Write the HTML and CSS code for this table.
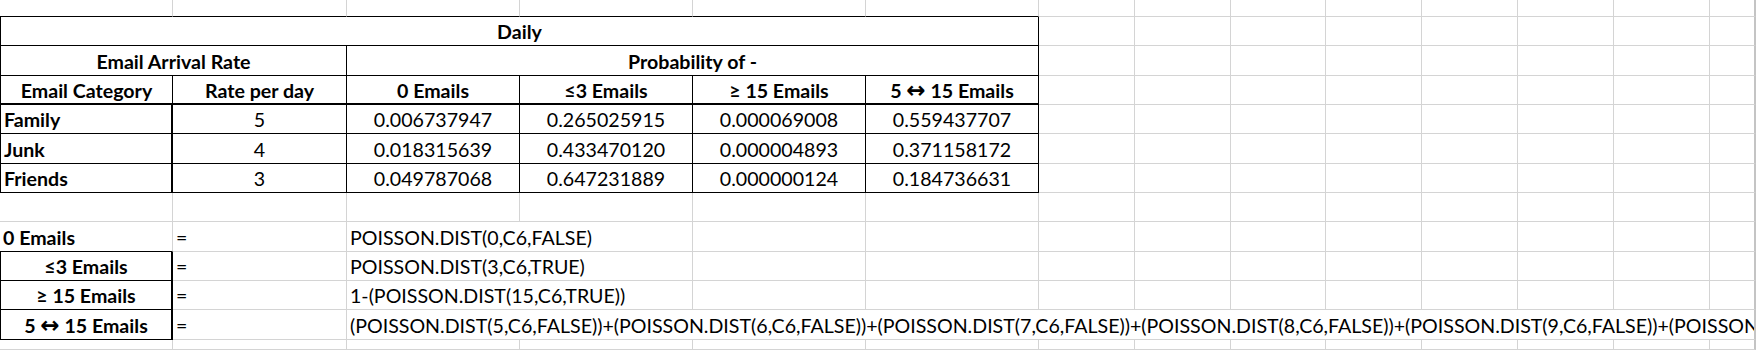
FILE: index.html
```html
<!DOCTYPE html>
<html lang="en">
<head>
<meta charset="utf-8">
<title>Daily Email Poisson</title>
<link rel="stylesheet" href="styles.css">
</head>
<body>
<div class="sheet">
  <!-- row 1 -->
  <div class="bb"></div><div class="bb"></div><div class="bb"></div><div class="bb"></div><div class="bb"></div><div class="bb"></div>
  <div></div><div></div><div></div><div></div><div></div><div></div><div></div><div class="last"></div>
  <!-- row 2 -->
  <div class="c b bb br bl span6">Daily</div>
  <div></div><div></div><div></div><div></div><div></div><div></div><div></div><div class="last"></div>
  <!-- row 3 -->
  <div class="c b bb br bl span2">Email Arrival Rate</div>
  <div class="c b bb br span4">Probability of -</div>
  <div></div><div></div><div></div><div></div><div></div><div></div><div></div><div class="last"></div>
  <!-- row 4 -->
  <div class="c b bl br bb2">Email Category</div>
  <div class="c b br bb2">Rate per day</div>
  <div class="c b br bb2">0 Emails</div>
  <div class="c b br bb2">≤3 Emails</div>
  <div class="c b br bb2">≥ 15 Emails</div>
  <div class="c b br bb2"><span>5 <span class="arr">↔</span> 15 Emails</span></div>
  <div></div><div></div><div></div><div></div><div></div><div></div><div></div><div class="last"></div>
  <!-- row 5 -->
  <div class="b bl br2 bb">Family</div>
  <div class="c br bb">5</div>
  <div class="c br bb">0.006737947</div>
  <div class="c br bb">0.265025915</div>
  <div class="c br bb">0.000069008</div>
  <div class="c br bb">0.559437707</div>
  <div></div><div></div><div></div><div></div><div></div><div></div><div></div><div class="last"></div>
  <!-- row 6 -->
  <div class="b bl br2 bb">Junk</div>
  <div class="c br bb">4</div>
  <div class="c br bb">0.018315639</div>
  <div class="c br bb">0.433470120</div>
  <div class="c br bb">0.000004893</div>
  <div class="c br bb">0.371158172</div>
  <div></div><div></div><div></div><div></div><div></div><div></div><div></div><div class="last"></div>
  <!-- row 7 -->
  <div class="b bl br2 bb">Friends</div>
  <div class="c br bb">3</div>
  <div class="c br bb">0.049787068</div>
  <div class="c br bb">0.647231889</div>
  <div class="c br bb">0.000000124</div>
  <div class="c br bb">0.184736631</div>
  <div></div><div></div><div></div><div></div><div></div><div></div><div></div><div class="last"></div>
  <!-- row 8 -->
  <div></div><div></div><div></div><div></div><div></div><div></div>
  <div></div><div></div><div></div><div></div><div></div><div></div><div></div><div class="last"></div>
  <!-- row 9 -->
  <div class="b bb">0 Emails</div>
  <div class="eq">=</div>
  <div class="span2">POISSON.DIST(0,C6,FALSE)</div>
  <div></div><div></div>
  <div></div><div></div><div></div><div></div><div></div><div></div><div></div><div class="last"></div>
  <!-- row 10 -->
  <div class="c b bl br2 bb">≤3 Emails</div>
  <div class="eq">=</div>
  <div class="span2">POISSON.DIST(3,C6,TRUE)</div>
  <div></div><div></div>
  <div></div><div></div><div></div><div></div><div></div><div></div><div></div><div class="last"></div>
  <!-- row 11 -->
  <div class="c b bl br2 bb">≥ 15 Emails</div>
  <div class="eq">=</div>
  <div class="span2">1-(POISSON.DIST(15,C6,TRUE))</div>
  <div></div><div></div>
  <div></div><div></div><div></div><div></div><div></div><div></div><div></div><div class="last"></div>
  <!-- row 12 -->
  <div class="c b bl br2 bb"><span>5 <span class="arr">↔</span> 15 Emails</span></div>
  <div class="eq">=</div>
  <div class="span12 clip last">(POISSON.DIST(5,C6,FALSE))+(POISSON.DIST(6,C6,FALSE))+(POISSON.DIST(7,C6,FALSE))+(POISSON.DIST(8,C6,FALSE))+(POISSON.DIST(9,C6,FALSE))+(POISSON</div>
  <!-- row 13 -->
  <div></div><div></div><div></div><div></div><div></div><div></div>
  <div></div><div></div><div></div><div></div><div></div><div></div><div></div><div class="last"></div>
</div>
</body>
</html>
```

FILE: styles.css
```css
html, body {
  margin: 0;
  padding: 0;
  background: #ffffff;
}

body {
  width: 1756px;
  height: 350px;
  overflow: hidden;
}

.sheet {
  display: grid;
  grid-template-columns: 173px 174px 173px 173px 173px 173px 96px 96px 95px 96px 96px 96px 96px 46px;
  grid-template-rows: 17px 29px 30px 29px 29px 30px 29px 29px 30px 29px 29px 30px 10px;
  width: 1756px;
  height: 350px;
  overflow: hidden;
  font-family: Lato, "Open Sans", "Liberation Sans", sans-serif;
  font-size: 19.6px;
  color: #000000;
}

.sheet > div {
  box-sizing: border-box;
  border-right: 1px solid #d4d4d4;
  border-bottom: 1px solid #d4d4d4;
  display: flex;
  align-items: center;
  padding: 1px 3px 0 3px;
  white-space: nowrap;
  min-width: 0;
}

.sheet > .last {
  border-right: 2px solid #c4c4c4;
}

.c { justify-content: center; }
.b { font-weight: 700; }

.sheet > .bb { border-bottom: 1px solid #000000; }
.sheet > .br { border-right: 1px solid #000000; }
.sheet > .bl { border-left: 1px solid #000000; }
.sheet > .bb2 { border-bottom: 2px solid #000000; }
.sheet > .br2 { border-right: 2px solid #000000; }

.span2 { grid-column: span 2; }
.span4 { grid-column: span 4; }
.span6 { grid-column: span 6; }
.span12 { grid-column: span 12; }

.eq { padding-left: 4px; }

.clip { overflow: hidden; }

.arr {
  font-family: "DejaVu Sans", sans-serif;
  font-weight: 700;
  font-size: 23px;
  line-height: 1;
}
```
